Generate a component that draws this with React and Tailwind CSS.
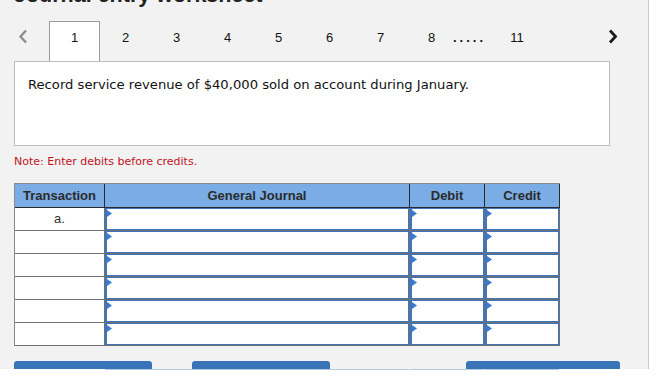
import React from "react";

const Tri = () => (
  <svg width="5" height="7" viewBox="0 0 5 7" className="block mt-[1px]">
    <polygon points="0,0 5,3.5 0,7" fill="#3b7bd3" />
  </svg>
);

const InputCell = ({ w }) => (
  <div className={`${w} h-full border-r border-[#6f6f6f]`}>
    <div className="w-full h-full bg-white border border-[#3d76bd] border-l-2">
      <Tri />
    </div>
  </div>
);

const rows = ["a.", "", "", "", "", ""];

export default function App() {
  return (
    <div className="w-[669px] h-[378px] bg-white overflow-hidden" style={{ fontFamily: '"Liberation Sans", Arial, sans-serif' }}>
      <div className="w-[649px] h-[369px] bg-[#f2f2f2] border-r border-[#c8c8c8] overflow-hidden pl-[14px]">
        {/* Title */}
        <div className="-mt-[16px] h-[22px] text-[21.5px] leading-[22px] font-bold text-[#222] whitespace-nowrap">
          Journal entry worksheet
        </div>

        {/* Pagination */}
        <div className="mt-[15px] flex items-start h-[40px] w-[604px] text-[13px] leading-[15px] text-[#111]">
          <div className="w-[35px] pl-[4px] pt-[8px]">
            <svg width="10" height="15" viewBox="0 0 10 15" className="block">
              <path d="M8 1.5 L2.5 7.5 L8 13.5" fill="none" stroke="#8c8c8c" strokeWidth="2.4" />
            </svg>
          </div>
          <div className="w-[51px] h-[40px] bg-white border border-b-0 border-[#9a9a9a] pt-[8px] text-center">1</div>
          {["2", "3", "4", "5", "6", "7"].map((n) => (
            <div key={n} className="w-[51px] pt-[9px] text-center">{n}</div>
          ))}
          <div className="w-[46px] pl-[5px] pt-[9px] text-center">8</div>
          <div className="ml-[1px] pt-[9px] font-bold tracking-[3px]">.....</div>
          <div className="ml-[16px] w-[30px] pt-[9px] text-center">11</div>
          <div className="flex-1" />
          <div className="pt-[8px]">
            <svg width="10" height="15" viewBox="0 0 10 15" className="block">
              <path d="M2 1.5 L7.5 7.5 L2 13.5" fill="none" stroke="#1a1a1a" strokeWidth="2.8" />
            </svg>
          </div>
        </div>

        {/* Question box */}
        <div
          className="w-[596px] h-[85px] bg-white border border-[#bdbdbd] px-[13px] pt-[15px] text-[13.15px] leading-[16px] text-[#111]"
          style={{ fontFamily: '"DejaVu Sans", Verdana, sans-serif' }}
        >
          Record service revenue of $40,000 sold on account during January.
        </div>

        {/* Note */}
        <div
          className="mt-[9px] text-[11px] leading-[13px] text-[#c0121e]"
          style={{ fontFamily: '"DejaVu Sans", Verdana, sans-serif' }}
        >
          Note: Enter debits before credits.
        </div>

        {/* Table */}
        <div className="mt-[15px] w-[546px] border-t border-l border-[#8a8a8a]">
          <div className="flex h-[24px] bg-[#7aade5] text-[13px] font-bold text-[#2b2b2b] leading-[23px]">
            <div className="w-[90px] border-r border-b border-[#2a2a2a] text-center">Transaction</div>
            <div className="w-[305px] border-r border-b border-[#2a2a2a] text-center">General Journal</div>
            <div className="w-[75px] border-r border-b border-[#2a2a2a] text-center">Debit</div>
            <div className="w-[75px] border-r border-b border-[#2a2a2a] text-center">Credit</div>
          </div>
          {rows.map((t, i) => (
            <div key={i} className="flex h-[23px] border-b border-[#6f6f6f]">
              <div className="w-[90px] h-full bg-white border-r border-[#6f6f6f] text-center text-[13px] leading-[22px] text-[#333]">
                {t}
              </div>
              <InputCell w="w-[305px]" />
              <InputCell w="w-[75px]" />
              <InputCell w="w-[75px]" />
            </div>
          ))}
        </div>

        {/* Buttons */}
        <div className="mt-[15px] flex">
          <div className="w-[138px] h-[20px] rounded-t-[3px] bg-[#3a74b8]" />
          <div className="ml-[40px] w-[138px] h-[20px] rounded-t-[3px] bg-[#3a74b8]" />
          <div className="ml-[136px] w-[154px] h-[20px] rounded-t-[3px] bg-[#3a74b8]" />
        </div>
      </div>
      <div className="flex ml-[105px]">
        <div className="w-[304px] h-[1px] bg-[#b5c9e2]" />
        <div className="ml-[1px] w-[74px] h-[1px] bg-[#b5c9e2]" />
        <div className="ml-[1px] w-[74px] h-[1px] bg-[#b5c9e2]" />
      </div>
    </div>
  );
}
